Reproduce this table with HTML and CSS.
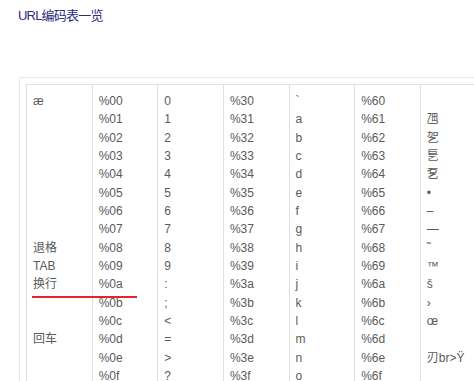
FILE: index.html
```html
<!DOCTYPE html>
<html lang="zh-CN">
<head>
<meta charset="utf-8">
<title>URL编码表一览</title>
<link rel="stylesheet" href="styles.css">
</head>
<body>
<h1 class="title">URL编码表一览</h1>
<div class="box">
  <table class="codes">
    <tr>
      <td>æ<br><br><br><br><br><br><br><br>退格<br>TAB<br>换行<br><br><br>回车<br><br>&nbsp;</td>
      <td>%00<br>%01<br>%02<br>%03<br>%04<br>%05<br>%06<br>%07<br>%08<br>%09<br>%0a<br>%0b<br>%0c<br>%0d<br>%0e<br>%0f</td>
      <td>0<br>1<br>2<br>3<br>4<br>5<br>6<br>7<br>8<br>9<br>:<br>;<br>&lt;<br>=<br>&gt;<br>?</td>
      <td>%30<br>%31<br>%32<br>%33<br>%34<br>%35<br>%36<br>%37<br>%38<br>%39<br>%3a<br>%3b<br>%3c<br>%3d<br>%3e<br>%3f</td>
      <td>`<br>a<br>b<br>c<br>d<br>e<br>f<br>g<br>h<br>i<br>j<br>k<br>l<br>m<br>n<br>o</td>
      <td>%60<br>%61<br>%62<br>%63<br>%64<br>%65<br>%66<br>%67<br>%68<br>%69<br>%6a<br>%6b<br>%6c<br>%6d<br>%6e<br>%6f</td>
      <td>&nbsp;<br>乪<br>乫<br>乬<br>乭<br>•<br>–<br>—<br>˜<br>™<br>š<br>›<br>œ<br><br>刃br&gt;Ÿ<br>&nbsp;</td>
      <td>%90<br>%91<br>%92<br>%93<br>%94<br>%95<br>%96<br>%97<br>%98<br>%99<br>%9a<br>%9b<br>%9c<br>%9d<br>%9e<br>%9f</td>
    </tr>
  </table>
  <div class="mark"></div>
</div>
</body>
</html>
```
FILE: styles.css
```css
html, body {
  margin: 0;
  padding: 0;
  background: #ffffff;
  overflow: hidden;
}

body {
  font-family: "Liberation Sans", Arial, "Noto Sans CJK SC", sans-serif;
}

.title {
  margin: 0;
  padding: 8px 18px 0;
  font-size: 13px;
  line-height: 16px;
  font-weight: normal;
  letter-spacing: -0.8px;
  color: #2b2b80;
}

.box {
  position: relative;
  display: inline-block;
  margin: 53px 0 0 19px;
  padding: 6px;
  border: 1px solid #e8e8e8;
}

.codes {
  width: 526px;
  table-layout: fixed;
  border-collapse: collapse;
  border: 1px solid #e0e0e0;
  font-size: 12px;
  line-height: 18.33px;
  color: #5a5a5a;
}

.codes td {
  vertical-align: top;
  padding: 7px 6px;
  border-left: 1px solid #e0e0e0;
  white-space: nowrap;
  overflow: hidden;
}

.mark {
  position: absolute;
  left: 12px;
  top: 218px;
  width: 105px;
  height: 2px;
  background: #e3242b;
}
```
